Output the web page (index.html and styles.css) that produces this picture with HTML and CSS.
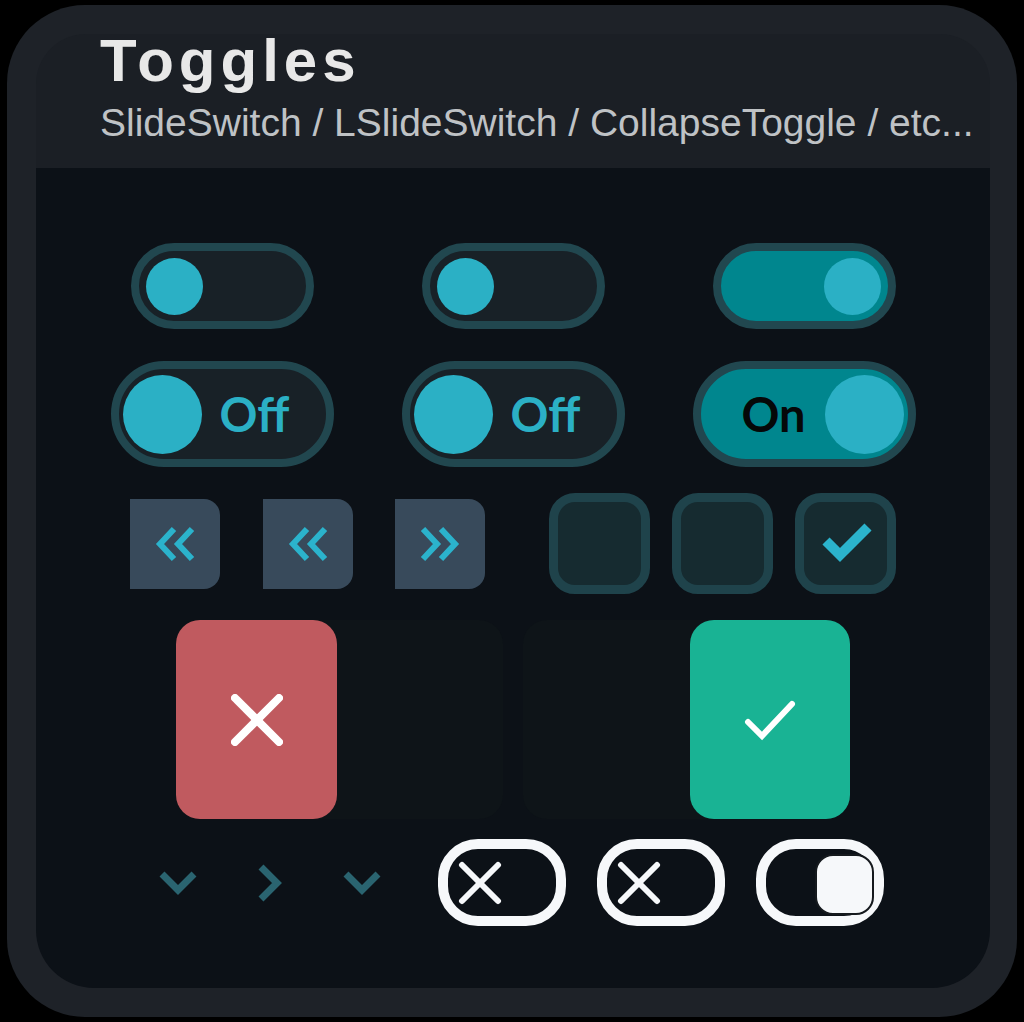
FILE: index.html
```html
<!DOCTYPE html>
<html lang="en">
<head>
  <meta charset="UTF-8" />
  <meta name="viewport" content="width=device-width, initial-scale=1.0"/>
  <title>Toggles</title>
  <link rel="stylesheet" href="styles.css">
</head>
<body>

  <div class="card">
    <div class="panel">

      <!-- En-tête -->
      <header class="head">
        <h1>Toggles</h1>
        <p>SlideSwitch / LSlideSwitch / CollapseToggle / etc...</p>
      </header>

      <main class="demo">

        <!-- SlideSwitch -->
        <div class="row row-slide">
          <div class="slide"><div class="knob"></div></div>
          <div class="slide"><div class="knob"></div></div>
          <div class="slide on"><div class="knob"></div></div>
        </div>

        <!-- LSlideSwitch -->
        <div class="row row-lslide">
          <div class="lslide"><div class="knob"></div><span class="lbl">Off</span></div>
          <div class="lslide"><div class="knob"></div><span class="lbl">Off</span></div>
          <div class="lslide on"><span class="lbl">On</span><div class="knob"></div></div>
        </div>

        <!-- CollapseToggle + checkboxes -->
        <div class="row row-mix">
          <div class="group collapse-group">
            <div class="collapse">
              <svg width="44" height="38" viewBox="0 0 44 38"><polyline points="21,4 7,19 21,34"/><polyline points="39,4 25,19 39,34"/></svg>
            </div>
            <div class="collapse">
              <svg width="44" height="38" viewBox="0 0 44 38"><polyline points="21,4 7,19 21,34"/><polyline points="39,4 25,19 39,34"/></svg>
            </div>
            <div class="collapse">
              <svg width="44" height="38" viewBox="0 0 44 38"><polyline points="5,4 19,19 5,34"/><polyline points="23,4 37,19 23,34"/></svg>
            </div>
          </div>
          <div class="group check-group">
            <div class="check"></div>
            <div class="check"></div>
            <div class="check">
              <svg width="83" height="83" viewBox="0 0 83 83"><polyline points="22,39 36,53 64,25"/></svg>
            </div>
          </div>
        </div>

        <!-- Swipe toggles -->
        <div class="row row-swipe">
          <div class="swipe">
            <div class="swipe-btn no">
              <svg width="52" height="52" viewBox="0 0 52 52"><line x1="4" y1="4" x2="48" y2="48"/><line x1="48" y1="4" x2="4" y2="48"/></svg>
            </div>
          </div>
          <div class="swipe right">
            <div class="swipe-btn yes">
              <svg width="60" height="60" viewBox="0 0 60 60"><polyline points="8,32 22,46 52,14"/></svg>
            </div>
          </div>
        </div>

        <!-- Chevrons + pills -->
        <div class="row row-small">
          <div class="group chevron-group">
            <svg class="chev" width="40" height="40" viewBox="0 0 40 40"><polyline points="4,11 20,27 36,11"/></svg>
            <svg class="chev" width="40" height="40" viewBox="0 0 40 40"><polyline points="11,4 27,20 11,36"/></svg>
            <svg class="chev" width="40" height="40" viewBox="0 0 40 40"><polyline points="4,11 20,27 36,11"/></svg>
          </div>
          <div class="group pill-group">
            <div class="pill">
              <svg width="44" height="44" viewBox="0 0 44 44"><line x1="4" y1="4" x2="40" y2="40"/><line x1="40" y1="4" x2="4" y2="40"/></svg>
            </div>
            <div class="pill">
              <svg width="44" height="44" viewBox="0 0 44 44"><line x1="4" y1="4" x2="40" y2="40"/><line x1="40" y1="4" x2="4" y2="40"/></svg>
            </div>
            <div class="pill on"><div class="pill-knob"></div></div>
          </div>
        </div>

      </main>
    </div>
  </div>

</body>
</html>
```

FILE: styles.css
```css
body {
  margin: 0;
  padding: 0;
  background: #000;
  font-family: 'Liberation Sans', Arial, sans-serif;
}
.card {
  margin: 5px 7px;
  width: 1010px;
  height: 1012px;
  box-sizing: border-box;
  padding: 29px 27px 29px 29px;
  background: #1e2228;
  border-radius: 78px;
}
.panel {
  height: 100%;
  display: flex;
  flex-direction: column;
}
.head {
  height: 134px;
  box-sizing: border-box;
  padding: 0 0 0 64px;
  background: #1b1f25;
  border-radius: 50px 50px 0 0;
}
.head h1 {
  margin: 0;
  font-size: 60px;
  line-height: 54px;
  letter-spacing: 5px;
  font-weight: bold;
  color: #e8e8e8;
}
.head p {
  margin: 13px 0 0 0;
  font-size: 39px;
  line-height: 44px;
  color: #bfc2c5;
  white-space: nowrap;
}
.demo {
  flex: 1;
  background: #0c1117;
  border-radius: 0 0 58px 58px;
  padding-top: 75px;
}
.row {
  display: flex;
  justify-content: center;
  align-items: center;
}
.group {
  display: flex;
  align-items: center;
}

/* slide switch */
.row-slide {
  gap: 108px;
}
.slide {
  width: 183px;
  height: 86px;
  box-sizing: border-box;
  border: 8px solid #21474f;
  border-radius: 43px;
  background: #182127;
  padding: 0 7px;
  display: flex;
  align-items: center;
}
.slide .knob {
  width: 57px;
  height: 57px;
  border-radius: 50%;
  background: #2bb0c5;
}
.slide.on, .lslide.on {
  background: #00868e;
  justify-content: flex-end;
}

/* slide switch with label */
.row-lslide {
  margin-top: 32px;
  gap: 68px;
}
.lslide {
  width: 223px;
  height: 106px;
  box-sizing: border-box;
  border: 8px solid #21474f;
  border-radius: 53px;
  background: #182127;
  padding: 0 4px;
  display: flex;
  align-items: center;
}
.lslide .knob {
  width: 79px;
  height: 79px;
  border-radius: 50%;
  background: #2bb0c5;
}
.lbl {
  font-family: Lato, 'Noto Sans', sans-serif;
  font-weight: bold;
  font-size: 47px;
  color: #2bb0c5;
  margin-left: 18px;
}
.lslide.on .lbl {
  color: #050808;
  margin: 0 auto 0 37px;
}

/* collapse + checkboxes */
.row-mix {
  margin-top: 26px;
  gap: 64px;
}
.collapse-group {
  gap: 42.5px;
}
.collapse {
  width: 90px;
  height: 90px;
  background: #384a5b;
  border-radius: 0 16px 16px 0;
  display: flex;
  align-items: center;
  justify-content: center;
}
.collapse polyline {
  fill: none;
  stroke: #2bb3cc;
  stroke-width: 6;
}
.check-group {
  gap: 22px;
}
.check {
  width: 101px;
  height: 101px;
  box-sizing: border-box;
  border: 9px solid #1f434b;
  border-radius: 26px;
  background: #162b30;
}
.check svg {
  display: block;
}
.check polyline {
  fill: none;
  stroke: #2bb3cc;
  stroke-width: 10;
}

/* swipe toggles */
.row-swipe {
  margin-top: 26px;
  gap: 20px;
}
.swipe {
  width: 327px;
  height: 199px;
  background: #0e1418;
  border-radius: 24px;
  display: flex;
}
.swipe.right {
  justify-content: flex-end;
}
.swipe-btn {
  width: 161px;
  height: 199px;
  border-radius: 24px;
  display: flex;
  align-items: center;
  justify-content: center;
}
.swipe-btn.no {
  background: #c05a5f;
}
.swipe-btn.yes {
  width: 160px;
  background: #19b394;
}
.swipe-btn line, .swipe-btn polyline {
  fill: none;
  stroke: #fff;
  stroke-linecap: round;
}
.swipe-btn line {
  stroke-width: 8;
}
.swipe-btn polyline {
  stroke-width: 6;
}

/* chevrons + outline pills */
.row-small {
  margin-top: 20px;
  justify-content: flex-start;
  padding-left: 122px;
  gap: 56px;
}
.chevron-group {
  gap: 52px;
}
.chev polyline {
  fill: none;
  stroke: #2a6470;
  stroke-width: 7;
}
.pill-group {
  gap: 31px;
}
.pill {
  width: 128px;
  height: 87px;
  box-sizing: border-box;
  border: 10px solid #f6f8fa;
  border-radius: 40px;
  background: #0c1117;
  padding-left: 10px;
  display: flex;
  align-items: center;
}
.pill line {
  stroke: #f6f8fa;
  stroke-width: 6;
  stroke-linecap: round;
}
.pill.on {
  justify-content: flex-end;
  padding: 0;
}
.pill-knob {
  width: 59px;
  height: 61px;
  box-sizing: border-box;
  border: 2px solid #15191d;
  border-radius: 18px;
  background: #f6f8fa;
  margin-top: 4px;
}
```
